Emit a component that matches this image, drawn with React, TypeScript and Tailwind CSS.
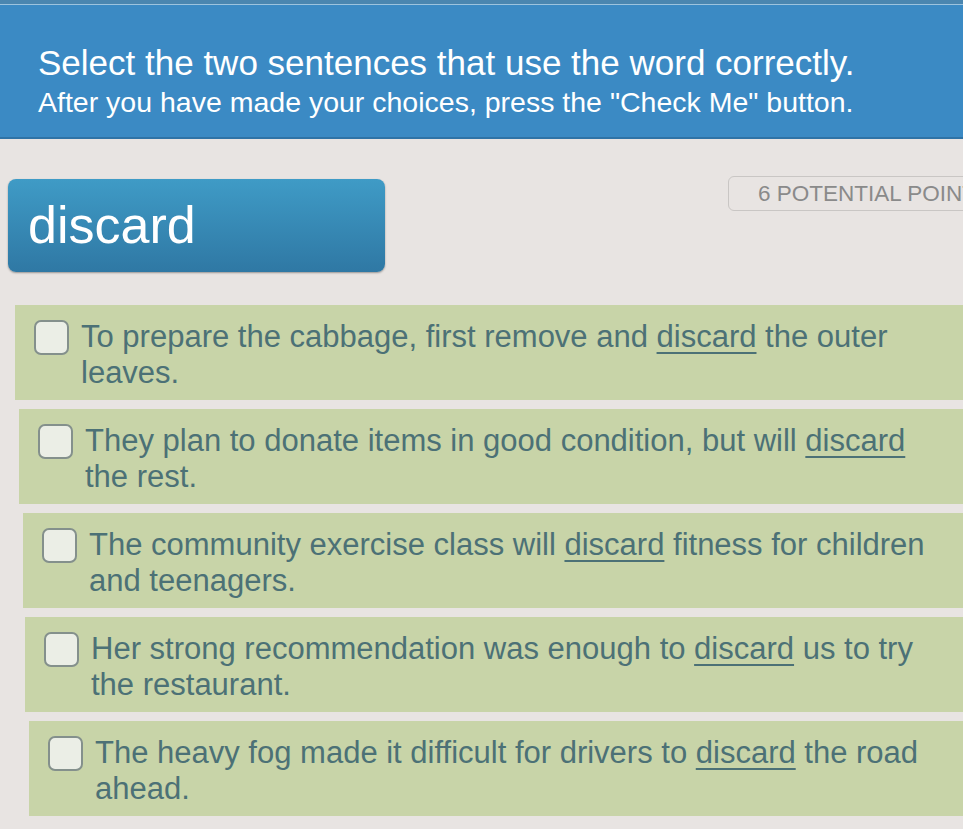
import React from "react";

type Choice = {
  id: number;
  before: string;
  after: string;
  indent: string;
};

const choices: Choice[] = [
  { id: 1, before: "To prepare the cabbage, first remove and ", after: " the outer leaves.", indent: "ml-[15px]" },
  { id: 2, before: "They plan to donate items in good condition, but will ", after: " the rest.", indent: "ml-[19px]" },
  { id: 3, before: "The community exercise class will ", after: " fitness for children and teenagers.", indent: "ml-[23px]" },
  { id: 4, before: "Her strong recommendation was enough to ", after: " us to try the restaurant.", indent: "ml-[25px]" },
  { id: 5, before: "The heavy fog made it difficult for drivers to ", after: " the road ahead.", indent: "ml-[29px]" },
];

export default function App() {
  return (
    <main className="w-[963px] h-[829px] overflow-hidden bg-[#e8e4e2] font-['Liberation_Sans',Arial,sans-serif]">
      <header className="bg-[#3b8ac4] border-b-2 border-[#2f73a6]">
        <div className="h-[5px] bg-[#4a86b0] border-b border-[#9cc3de]" />
        <div className="pl-[38px] pt-[37px] pb-[17px] text-white">
          <h1 className="text-[35px] leading-[42px]">Select the two sentences that use the word correctly.</h1>
          <p className="text-[28.5px] leading-[36px]">After you have made your choices, press the "Check Me" button.</p>
        </div>
      </header>

      <section className="flex items-start justify-between pt-[37px]">
        <div className="ml-[8px] mt-[3px] w-[377px] h-[93px] rounded-lg bg-gradient-to-b from-[#3f9bc6] to-[#2f78a4] shadow-[0_1px_2px_rgba(0,0,0,0.35)] flex items-center pl-[20px]">
          <span className="text-white text-[52px] leading-none pb-[2px]">discard</span>
        </div>
        <div className="mr-[-110px] w-[345px] h-[35px] rounded-md border border-[#c9c6c4] flex items-center pl-[29px] text-[#8a8a8a] text-[22.5px] whitespace-nowrap">
          6 POTENTIAL POINTS
        </div>
      </section>

      <ul className="mt-[33px] flex flex-col gap-[9px]">
        {choices.map((c) => (
          <li key={c.id} className={`${c.indent} bg-[#c8d4a8] pt-[14px] pb-[9px] pl-[19px] flex items-start`}>
            <span className="mt-[1px] shrink-0 w-[35px] h-[35px] rounded-[7px] border-2 border-[#84908c] bg-[#ebeee6]" />
            <p className="ml-[12px] w-[850px] text-[31px] leading-[36px] text-[#4c7176]">
              {c.before}
              <span className="underline decoration-[2px] underline-offset-[5px]">discard</span>
              {c.after}
            </p>
          </li>
        ))}
      </ul>
    </main>
  );
}
